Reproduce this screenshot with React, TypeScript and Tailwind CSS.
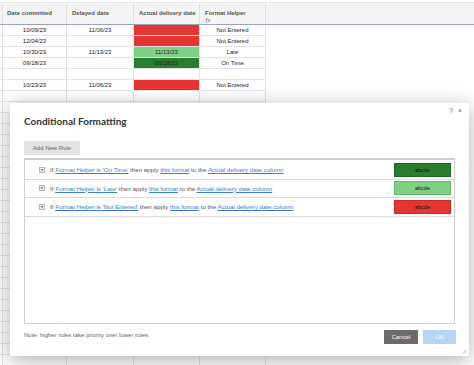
import React from "react";

type Fill = "red" | "light" | "dark" | "";

type Row = {
    committed: string;
    delayed: string;
    actual: string;
    fill: Fill;
    helper: string;
};

const rows: Row[] = [
    { committed: "10/09/23", delayed: "11/06/23", actual: "", fill: "red", helper: "Not Entered" },
    { committed: "12/04/23", delayed: "", actual: "", fill: "red", helper: "Not Entered" },
    { committed: "10/30/23", delayed: "11/13/23", actual: "11/13/23", fill: "light", helper: "Late" },
    { committed: "09/18/23", delayed: "", actual: "09/18/23", fill: "dark", helper: "On Time" },
    { committed: "", delayed: "", actual: "", fill: "", helper: "" },
    { committed: "10/23/23", delayed: "11/06/23", actual: "", fill: "red", helper: "Not Entered" },
];

// blank rows that sit behind the dialog
const blankRows: Row[] = Array.from({ length: 26 }, () => ({
    committed: "",
    delayed: "",
    actual: "",
    fill: "",
    helper: "",
}));

const fillClass: Record<Fill, string> = {
    red: "bg-[#e53431]",
    light: "bg-[#7fd083]",
    dark: "bg-[#2a7d2e]",
    "": "",
};

const rules = [
    { label: "'On Time'", swatch: "bg-[#2a7d2e] border-[#1f6a24]" },
    { label: "'Late'", swatch: "bg-[#7fd083] border-[#66b86a]" },
    { label: "'Not Entered'", swatch: "bg-[#e53431] border-[#c92a27]" },
];

const SheetRow = ({ row }: { row: Row }) => (
    <div className="flex h-[11px] text-[6px] leading-[10px] text-[#222]">
        <div className="w-[3px] border-r border-b border-[#e3e3e3]" />
        <div className="w-[64px] border-r border-b border-[#e3e3e3] text-center">{row.committed}</div>
        <div className="w-[67px] border-r border-b border-[#e3e3e3] text-center">{row.delayed}</div>
        <div className={`w-[66px] border-r border-b border-[#e3e3e3] text-center ${fillClass[row.fill]}`}>
            {row.actual}
        </div>
        <div className="w-[66px] border-r border-b border-[#e3e3e3] text-center">{row.helper}</div>
    </div>
);

const ExpandIcon = () => (
    <svg width="6" height="6" viewBox="0 0 6 6" className="shrink-0">
        <rect x="0.5" y="0.5" width="5" height="5" fill="#eeeeee" stroke="#b5b5b5" />
        <path d="M1.7 2.3 L4.3 2.3 L3 3.9 Z" fill="#555" />
    </svg>
);

const RuleRow = ({ label, swatch }: { label: string; swatch: string }) => (
    <div className="flex h-[18.5px] items-center justify-between border-b border-[#dcdcdc] pl-[14px] pr-[3px]">
        <div className="flex items-center gap-[5px] text-[6.2px] text-[#555]">
            <ExpandIcon />
            <span className="whitespace-pre">
                If{" "}
                <span className="text-[#3b7ccf] underline">Format Helper is {label}</span> then apply{" "}
                <span className="text-[#3b7ccf] underline">this format</span> to the{" "}
                <span className="text-[#3b7ccf] underline">Actual delivery date column</span>
            </span>
        </div>
        <div
            className={`flex h-[14px] w-[57px] items-center justify-center border text-[5.5px] text-[#111] ${swatch}`}
        >
            abcde
        </div>
    </div>
);

export default function App() {
    return (
        <div
            className="relative h-[365px] w-[474px] overflow-hidden bg-white"
            style={{ fontFamily: '"Liberation Sans", Arial, sans-serif' }}
        >
            {/* spreadsheet */}
            <div className="flex flex-col">
                <div className="h-[3px] border-b border-[#e6e6e6]" />
                <div className="flex h-[22px] border-b border-[#9aa3b0] bg-[#f4f4f4] text-[6px] font-bold leading-[8px] text-[#555]">
                    <div className="w-[3px] border-r border-[#e0e0e0]" />
                    <div className="w-[64px] border-r border-[#e0e0e0] pl-[4px] pt-[6px]">Date committed</div>
                    <div className="w-[67px] border-r border-[#e0e0e0] pl-[5px] pt-[6px]">Delayed date</div>
                    <div className="w-[66px] border-r border-[#e0e0e0] pl-[5px] pt-[6px]">Actual delivery date</div>
                    <div className="flex w-[66px] flex-col border-r border-[#e0e0e0] pl-[5px] pt-[6px]">
                        <span>Format Helper</span>
                        <span className="text-[5px] font-normal italic leading-[6px]">ƒx</span>
                    </div>
                    <div className="flex-1" />
                </div>
                {rows.map((r, i) => (
                    <SheetRow key={i} row={r} />
                ))}
                {blankRows.map((r, i) => (
                    <SheetRow key={`b${i}`} row={r} />
                ))}
            </div>

            {/* dialog */}
            <div className="absolute left-[10px] top-[103px] flex h-[253px] w-[459px] flex-col bg-white px-[14px] shadow-[0_4px_20px_rgba(0,0,0,0.32)]">
                <div className="absolute right-[7px] top-[3px] flex gap-[5px] text-[7px] text-[#666]">
                    <span>?</span>
                    <span>×</span>
                </div>

                <h1
                    className="pt-[11px] text-[10px] font-bold leading-[14px] text-[#333]"
                    style={{ fontFamily: "Lato, sans-serif" }}
                >
                    Conditional Formatting
                </h1>

                <button className="mt-[13px] flex h-[14px] w-[56px] items-center justify-center bg-[#e3e3e3] text-[6px] text-[#666]">
                    Add New Rule
                </button>

                <div className="mt-[3px] flex h-[166px] w-[431px] flex-col border border-t-2 border-[#cfcfcf] pt-[1px]">
                    {rules.map((r) => (
                        <RuleRow key={r.label} label={r.label} swatch={r.swatch} />
                    ))}
                </div>

                <div className="mt-[6px] flex w-[432px] items-start justify-between">
                    <p className="pt-[1px] text-[6px] leading-[8px] text-[#666]">
                        Note: higher rules take priority over lower rules.
                    </p>
                    <div className="flex gap-[5px]">
                        <button className="h-[14px] w-[34px] bg-[#6b6b6b] text-[6px] text-white">Cancel</button>
                        <button className="h-[14px] w-[33px] bg-[#b5d5f7] text-[6px] text-white">OK</button>
                    </div>
                </div>

                <svg width="5" height="5" viewBox="0 0 5 5" className="absolute bottom-[2px] right-[2px]">
                    <path d="M0.5 4.5 L4.5 0.5 M2.5 4.5 L4.5 2.5" stroke="#aaa" strokeWidth="0.7" />
                </svg>
            </div>
        </div>
    );
}
